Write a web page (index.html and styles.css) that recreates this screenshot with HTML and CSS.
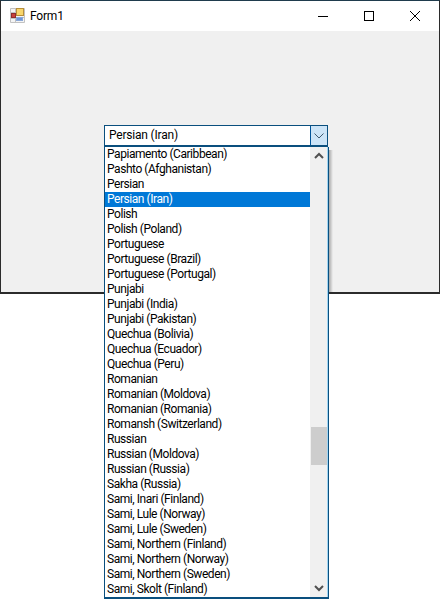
FILE: index.html
```html
<!DOCTYPE html>
<html lang="en">
<head>
  <meta charset="UTF-8" />
  <title>Form1</title>
  <link rel="stylesheet" href="styles.css">
</head>
<body>

  <!-- Form window -->
  <div class="window">
    <div class="titlebar">
      <svg class="app-icon" width="16" height="16" viewBox="0 0 16 16">
        <path d="M0.5 0.5h14v14h-14zM0.5 4.5h5M5.5 0.5v14M0.5 10.5h5M5.5 9.5h9" fill="#f4f4f4" stroke="#c2c2c2"/>
        <rect x="6.5" y="0.5" width="7" height="7" fill="#f8d66c" stroke="#b88f3a"/>
        <rect x="1.5" y="5.5" width="4" height="4" fill="#c8403c" stroke="#8e2c2c"/>
        <rect x="6.5" y="9.5" width="6" height="3" fill="#6f97d8" stroke="#8aa8d8"/>
      </svg>
      <span class="title">Form1</span>
      <div class="controls">
        <svg class="ctl" width="46" height="30" viewBox="0 0 46 30">
          <path d="M18 15.5h10" stroke="#000" fill="none"/>
        </svg>
        <svg class="ctl" width="46" height="30" viewBox="0 0 46 30">
          <rect x="18.5" y="10.5" width="9" height="9" stroke="#000" fill="none"/>
        </svg>
        <svg class="ctl" width="46" height="30" viewBox="0 0 46 30">
          <path d="M18 10l10 10M28 10l-10 10" stroke="#000" fill="none"/>
        </svg>
      </div>
    </div>
    <div class="client">
      <div class="combo">
        <span class="combo-text">Persian (Iran)</span>
        <div class="combo-btn">
          <svg width="10" height="6" viewBox="0 0 10 6"><path d="M0.5 0.5l4.5 4.5 4.5-4.5" stroke="#3f5a70" fill="none"/></svg>
        </div>
      </div>
    </div>
  </div>

  <!-- Dropdown shadow only shows over the form, not the desktop below it -->
  <div class="drop-shadow"></div>

  <!-- Open dropdown, hangs over the window edge -->
  <div class="dropdown">
    <ul class="list">
      <li>Papiamento (Caribbean)</li>
      <li>Pashto (Afghanistan)</li>
      <li>Persian</li>
      <li class="selected">Persian (Iran)</li>
      <li>Polish</li>
      <li>Polish (Poland)</li>
      <li>Portuguese</li>
      <li>Portuguese (Brazil)</li>
      <li>Portuguese (Portugal)</li>
      <li>Punjabi</li>
      <li>Punjabi (India)</li>
      <li>Punjabi (Pakistan)</li>
      <li>Quechua (Bolivia)</li>
      <li>Quechua (Ecuador)</li>
      <li>Quechua (Peru)</li>
      <li>Romanian</li>
      <li>Romanian (Moldova)</li>
      <li>Romanian (Romania)</li>
      <li>Romansh (Switzerland)</li>
      <li>Russian</li>
      <li>Russian (Moldova)</li>
      <li>Russian (Russia)</li>
      <li>Sakha (Russia)</li>
      <li>Sami, Inari (Finland)</li>
      <li>Sami, Lule (Norway)</li>
      <li>Sami, Lule (Sweden)</li>
      <li>Sami, Northern (Finland)</li>
      <li>Sami, Northern (Norway)</li>
      <li>Sami, Northern (Sweden)</li>
      <li>Sami, Skolt (Finland)</li>
    </ul>
    <div class="scrollbar">
      <svg width="16" height="17" viewBox="0 0 16 17"><path d="M4 11l4-4 4 4" stroke="#505050" stroke-width="2" fill="none"/></svg>
      <div class="track"><div class="thumb"></div></div>
      <svg width="16" height="17" viewBox="0 0 16 17"><path d="M4 6l4 4 4-4" stroke="#505050" stroke-width="2" fill="none"/></svg>
    </div>
  </div>

</body>
</html>
```

FILE: styles.css
```css
* {
  box-sizing: border-box;
  margin: 0;
  padding: 0;
}

body {
  position: relative;
  width: 440px;
  height: 599px;
  overflow: hidden;
  background: #fff;
  font-family: Roboto, "Liberation Sans", sans-serif;
  font-size: 12px;
  color: #000;
}

.window {
  height: 294px;
  display: flex;
  flex-direction: column;
  border: 1px solid #2b2b2b;
  border-top-color: #1f3b4d;
  border-bottom-width: 2px;
}

.titlebar {
  height: 30px;
  display: flex;
  align-items: center;
  background: #fff;
  padding-left: 9px;
}

.app-icon {
  flex: none;
}

.title {
  margin-left: 4px;
  letter-spacing: -0.2px;
}

.controls {
  margin-left: auto;
  display: flex;
  margin-right: 1px;
}

.ctl {
  display: block;
}

.client {
  flex: 1;
  background: #f0f0f0;
  padding: 94px 111px 0 103px;
}

.combo {
  height: 22px;
  display: flex;
  background: #fff;
  border: 1px solid #0a4f7e;
  border-bottom-width: 2px;
}

.combo-text {
  flex: 1;
  padding-left: 4px;
  line-height: 19px;
  letter-spacing: -0.2px;
}

.combo-btn {
  width: 17px;
  display: flex;
  align-items: center;
  justify-content: center;
  background: #cce4f7;
  border-left: 1px solid #005499;
}

.drop-shadow {
  position: absolute;
  left: 329px;
  top: 150px;
  width: 4px;
  height: 142px;
  background: linear-gradient(to right, #a8a8a8, #f0f0f0);
}

.dropdown {
  position: absolute;
  left: 104px;
  top: 147px;
  width: 225px;
  height: 452px;
  display: flex;
  background: #fff;
  border: 1px solid #0a4f7e;
  border-width: 0 1px 2px 1px;
}

.list {
  flex: 1;
  list-style: none;
}

.list li {
  height: 15px;
  line-height: 15px;
  padding-left: 2px;
  white-space: nowrap;
  letter-spacing: -0.45px;
}

.list li.selected {
  background: #0078d7;
  color: #fff;
}

.scrollbar {
  width: 18px;
  padding-left: 1px;
  display: flex;
  flex-direction: column;
  background: #f0f0f0;
  border-right: 1px solid #9fd4f2;
}

.scrollbar svg {
  flex: none;
  display: block;
}

.track {
  flex: 1;
  padding-top: 263px;
}

.thumb {
  height: 38px;
  background: #cdcdcd;
}
```
